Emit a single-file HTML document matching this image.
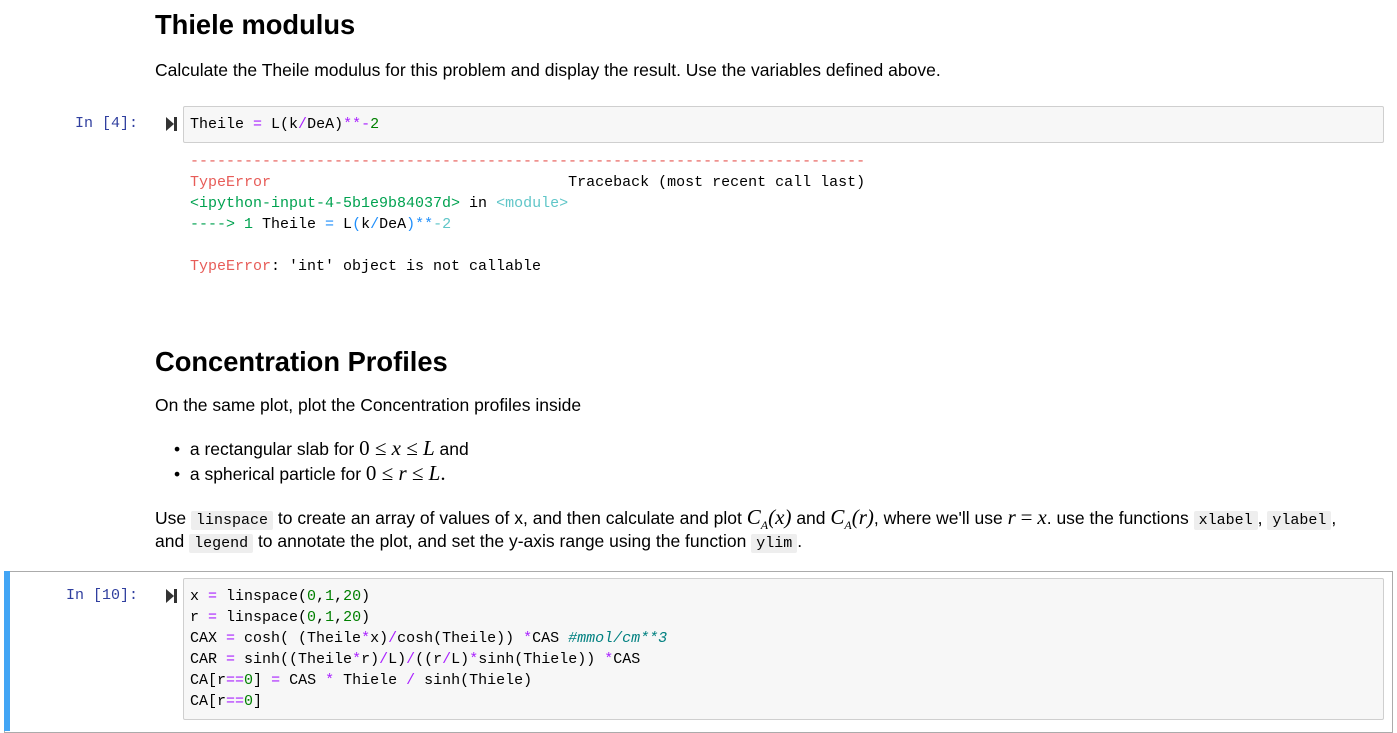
<!DOCTYPE html>
<html><head><meta charset="utf-8"><style>
body{margin:0;background:#fff;width:1397px;height:726px;overflow:hidden;font-family:"Liberation Sans",sans-serif;color:#000;position:relative}
.a{position:absolute;white-space:nowrap}
h1{font-size:27.3px;font-weight:bold;margin:0}
.t{font-size:17.5px}
.m{font-family:"Liberation Mono",monospace;font-size:15px;line-height:21px;white-space:pre}
.p{color:#303f9f;font-family:"Liberation Mono",monospace;font-size:15px;text-align:right;width:138px}
.box{position:absolute;background:#f7f7f7;border:1px solid #cfcfcf;border-radius:2px}
.o{color:#aa22ff}.g{color:#008000}.r{color:#e75c58}.gr{color:#00a250}.c{color:#60c6c8}.b{color:#208ffb}.cm{color:#008080;font-style:italic}
code{font-family:"Liberation Mono",monospace;font-size:15px;background:#eee;padding:1px 5px;border-radius:2px}
i.v{font-family:"Liberation Serif",serif;font-size:21px}
.run{position:absolute;width:0;height:0;border-left:8px solid #333;border-top:7px solid transparent;border-bottom:7px solid transparent}
.run:after{content:"";position:absolute;left:0;top:-7px;width:3px;height:14px;background:#333}
</style></head><body>
<h1 class="a" style="left:155px;top:9px">Thiele modulus</h1>
<div class="a t" style="left:155px;top:60px">Calculate the Theile modulus for this problem and display the result. Use the variables defined above.</div>

<div class="a p" style="left:0;top:115px">In [4]:</div>
<div class="run" style="left:166px;top:117px"></div>
<div class="box" style="left:183px;top:106px;width:1199px;height:35px"></div>
<div class="a m" style="left:190px;top:114px">Theile <span class="o">=</span> L(k<span class="o">/</span>DeA)<span class="o">**-</span><span class="g">2</span></div>

<div class="a m" style="left:190px;top:151px"><span class="r">---------------------------------------------------------------------------</span>
<span class="r">TypeError</span>                                 Traceback (most recent call last)
<span class="gr">&lt;ipython-input-4-5b1e9b84037d&gt;</span> in <span class="c">&lt;module&gt;</span>
<span class="gr">----&gt; 1</span> Theile <span class="b">=</span> L<span class="b">(</span>k<span class="b">/</span>DeA<span class="b">)</span><span class="b">**</span><span class="c">-2</span>

<span class="r">TypeError</span>: 'int' object is not callable</div>

<h1 class="a" style="left:155px;top:346px">Concentration Profiles</h1>
<div class="a t" style="left:155px;top:395px">On the same plot, plot the Concentration profiles inside</div>
<div class="a t" style="left:174px;top:436px">•&nbsp;&nbsp;a rectangular slab for <i class="v" style="font-style:normal">0 ≤ <i>x</i> ≤ <i>L</i></i> and</div>
<div class="a t" style="left:174px;top:461px">•&nbsp;&nbsp;a spherical particle for <i class="v" style="font-style:normal">0 ≤ <i>r</i> ≤ <i>L</i>.</i></div>
<div class="a t" style="left:155px;top:505px">Use <code>linspace</code> to create an array of values of x, and then calculate and plot <i class="v"><i>C<sub style="font-size:12px">A</sub></i>(<i>x</i>)</i> and <i class="v">C<sub style="font-size:12px">A</sub>(r)</i>, where we'll use <i class="v">r</i> <span style="font-family:'Liberation Serif';font-size:21px">=</span> <i class="v">x</i>. use the functions <code>xlabel</code>, <code>ylabel</code>,</div>
<div class="a t" style="left:155px;top:531px">and <code>legend</code> to annotate the plot, and set the y-axis range using the function <code>ylim</code>.</div>

<div style="position:absolute;left:4px;top:571px;width:1387px;height:160px;border:1px solid #ababab"></div>
<div style="position:absolute;left:4px;top:571px;width:6px;height:160px;background:#42a5f5"></div>
<div class="a p" style="left:0;top:587px">In [10]:</div>
<div class="run" style="left:166px;top:589px"></div>
<div class="box" style="left:183px;top:578px;width:1199px;height:140px"></div>
<div class="a m" style="left:190px;top:586px">x <span class="o">=</span> linspace(<span class="g">0</span>,<span class="g">1</span>,<span class="g">20</span>)
r <span class="o">=</span> linspace(<span class="g">0</span>,<span class="g">1</span>,<span class="g">20</span>)
CAX <span class="o">=</span> cosh( (Theile<span class="o">*</span>x)<span class="o">/</span>cosh(Theile)) <span class="o">*</span>CAS <span class="cm">#mmol/cm**3</span>
CAR <span class="o">=</span> sinh((Theile<span class="o">*</span>r)<span class="o">/</span>L)<span class="o">/</span>((r<span class="o">/</span>L)<span class="o">*</span>sinh(Thiele)) <span class="o">*</span>CAS
CA[r<span class="o">==</span><span class="g">0</span>] <span class="o">=</span> CAS <span class="o">*</span> Thiele <span class="o">/</span> sinh(Thiele)
CA[r<span class="o">==</span><span class="g">0</span>]</div>
</body></html>
